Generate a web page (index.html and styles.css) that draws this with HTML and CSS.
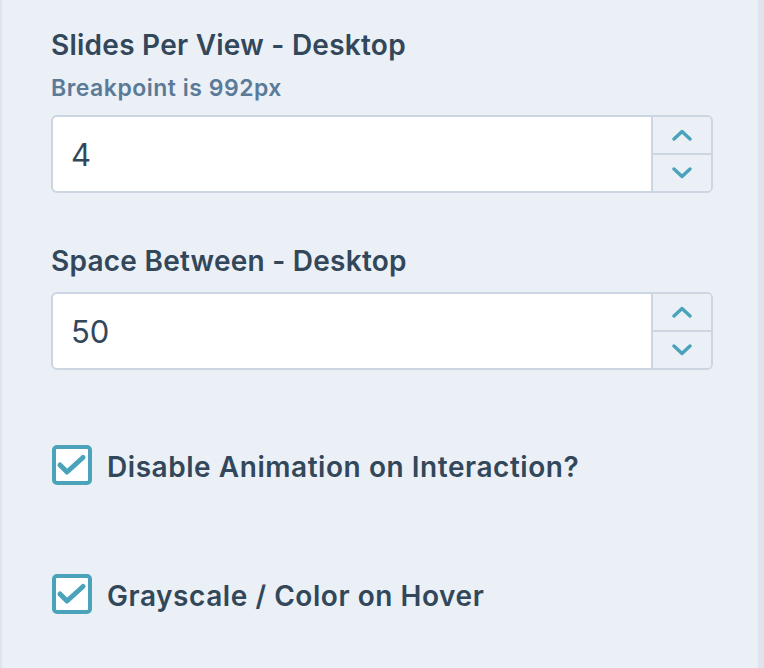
FILE: index.html
```html
<!DOCTYPE html>
<html>
<head>
<meta charset="utf-8">
<link rel="stylesheet" href="styles.css">
</head>
<body>
<div class="panel">
  <div class="content">
    <div class="field">
      <label class="label">Slides Per View - Desktop</label>
      <div class="help">Breakpoint is 992px</div>
      <div class="number-input">
        <div class="value">4</div>
        <div class="spinner">
          <div class="spin-btn"><svg width="20" height="12" viewBox="0 0 20 12"><polyline points="2,10 10,2.5 18,10" fill="none" stroke="#4ba3bb" stroke-width="3.4" stroke-linecap="round" stroke-linejoin="round"/></svg></div>
          <div class="spin-btn"><svg width="20" height="12" viewBox="0 0 20 12"><polyline points="2,2 10,9.5 18,2" fill="none" stroke="#4ba3bb" stroke-width="3.4" stroke-linecap="round" stroke-linejoin="round"/></svg></div>
        </div>
      </div>
    </div>
    <div class="field field-second">
      <label class="label">Space Between - Desktop</label>
      <div class="number-input">
        <div class="value">50</div>
        <div class="spinner">
          <div class="spin-btn"><svg width="20" height="12" viewBox="0 0 20 12"><polyline points="2,10 10,2.5 18,10" fill="none" stroke="#4ba3bb" stroke-width="3.4" stroke-linecap="round" stroke-linejoin="round"/></svg></div>
          <div class="spin-btn"><svg width="20" height="12" viewBox="0 0 20 12"><polyline points="2,2 10,9.5 18,2" fill="none" stroke="#4ba3bb" stroke-width="3.4" stroke-linecap="round" stroke-linejoin="round"/></svg></div>
        </div>
      </div>
    </div>
    <div class="check-row check-first">
      <span class="checkbox"><svg width="32" height="32" viewBox="0 0 32 32"><polyline points="4,16 11,23 27,8.5" fill="none" stroke="#4ba3bb" stroke-width="5" stroke-linecap="round" stroke-linejoin="round"/></svg></span>
      <span class="check-label">Disable Animation on Interaction?</span>
    </div>
    <div class="check-row check-second">
      <span class="checkbox"><svg width="32" height="32" viewBox="0 0 32 32"><polyline points="4,16 11,23 27,8.5" fill="none" stroke="#4ba3bb" stroke-width="5" stroke-linecap="round" stroke-linejoin="round"/></svg></span>
      <span class="check-label">Grayscale / Color on Hover</span>
    </div>
  </div>
</div>
</body>
</html>
```

FILE: styles.css
```css
html, body {
  margin: 0;
  padding: 0;
  background: #eaf0f6;
}
body {
  font-family: Inter, "Noto Sans", sans-serif;
  color: #33475b;
}
.panel {
  height: 668px;
  box-sizing: border-box;
  border-left: 2px solid #dfe4ec;
  border-right: 6px solid #dfe4ec;
  background: #eaf0f6;
  overflow: hidden;
}
.content {
  padding: 28px 0 0 49px;
  display: flex;
  flex-direction: column;
}
.label {
  display: block;
  font-size: 28px;
  font-weight: 600;
  line-height: 35px;
  letter-spacing: 0.25px;
  color: #33475b;
}
.help {
  margin-top: 10px;
  font-size: 23px;
  font-weight: 600;
  line-height: 30px;
  letter-spacing: 0.5px;
  color: #5b7a98;
}
.number-input {
  margin-top: 12px;
  width: 662px;
  height: 78px;
  box-sizing: border-box;
  border: 2px solid #cbd6e2;
  border-radius: 6px;
  background: #fff;
  display: flex;
  overflow: hidden;
}
.value {
  flex: 1;
  display: flex;
  align-items: center;
  padding-left: 18px;
  font-size: 31px;
  font-weight: 400;
  color: #33475b;
}
.spinner {
  width: 58px;
  border-left: 2px solid #cbd6e2;
  background: #eaf0f6;
  display: flex;
  flex-direction: column;
}
.spin-btn {
  flex: 1;
  display: flex;
  align-items: center;
  justify-content: center;
}
.spin-btn + .spin-btn {
  border-top: 2px solid #cbd6e2;
}
.field-second {
  margin-top: 51px;
}
.field-second .number-input {
  margin-top: 13px;
}
.check-row {
  display: flex;
  align-items: center;
  gap: 15px;
  padding-left: 1px;
}
.check-first {
  margin-top: 74px;
}
.check-second {
  margin-top: 88px;
}
.checkbox {
  width: 40px;
  height: 40px;
  box-sizing: border-box;
  border: 4px solid #4ba3bb;
  border-radius: 5px;
  background: #fff;
  display: flex;
  align-items: center;
  justify-content: center;
}
.check-label {
  font-size: 28px;
  font-weight: 600;
  line-height: 35px;
  letter-spacing: 0.55px;
  padding-top: 6px;
  color: #33475b;
}
```
